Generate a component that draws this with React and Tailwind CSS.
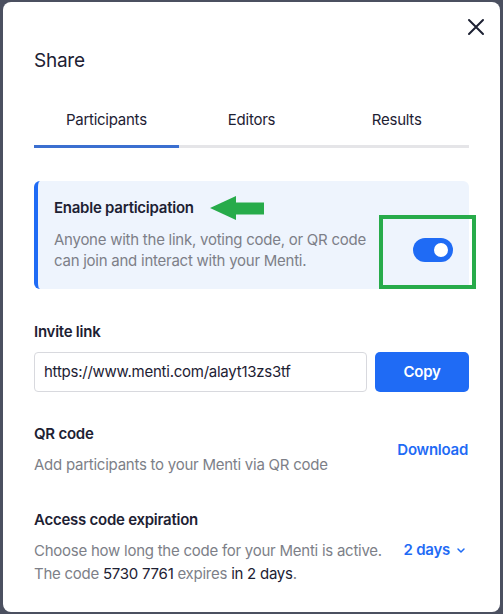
import React from "react";

export default function App() {
  return (
    <div className="w-[503px] h-[614px] bg-[#4b5060] pl-[3px] pr-[3px] pt-[2px] pb-[2px] tracking-[-0.25px]" style={{ fontFamily: "Inter, 'Noto Sans', sans-serif" }}>
      <div className="relative h-full w-full rounded-[8px] bg-white px-[31px] text-[#1d2133]">
        <button className="absolute right-[15px] top-[16px] text-[#1d2133]">
          <svg width="18" height="18" viewBox="0 0 18 18" fill="none" stroke="currentColor" strokeWidth="2" strokeLinecap="round">
            <path d="M2 2L16 16M16 2L2 16" />
          </svg>
        </button>
        <div className="pt-[47px] text-[19px] leading-[24px]">Share</div>
        <div className="mt-[25px] flex">
          <div className="flex h-[50px] w-[145px] items-center justify-center border-b-[3px] border-[#3b6fd0] pb-[2px] text-[15px] text-[#1d2133]">Participants</div>
          <div className="flex h-[50px] w-[146px] items-center justify-center border-b-[3px] border-[#e5e5e8] pb-[2px] text-[15px]">Editors</div>
          <div className="flex h-[50px] w-[145px] items-center justify-center border-b-[3px] border-[#e5e5e8] pb-[2px] text-[15px]">Results</div>
        </div>
        <div className="relative mt-[33px] flex h-[108px] items-start rounded-[6px] border-l-[4px] border-[#1f6bf5] bg-[#eef4fd] pl-[16px] pr-[16px] pt-[14px]">
          <div className="flex-1">
            <div className="flex h-[26px] items-center gap-[15px]">
              <span className="text-[15px] font-semibold">Enable participation</span>
              <svg width="56" height="26" viewBox="0 0 56 26">
                <path d="M1 13 L27 1 L27 7.5 L55 7.5 L55 19.5 L27 19.5 L27 25 Z" fill="#27ab4a" />
              </svg>
            </div>
            <div className="mt-[8px] text-[15px] leading-[21px] text-[#7d7f88]">
              Anyone with the link, voting code, or QR code<br />can join and interact with your Menti.
            </div>
          </div>
          <div className="absolute left-[341px] top-[34px] h-[74px] w-[97px] border-[4px] border-[#27ab4a] pl-[30px] pt-[19px]">
            <div className="flex h-[24px] w-[40px] items-center justify-end rounded-full bg-[#1f6bf5] pr-[3px]">
              <div className="h-[18px] w-[18px] rounded-full border-[2px] border-[#1f6bf5] bg-white"></div>
            </div>
          </div>
        </div>
        <div className="mt-[33px] text-[15px] font-semibold leading-[20px]">Invite link</div>
        <div className="mt-[10px] flex gap-[8px]">
          <div className="flex h-[40px] w-[333px] items-center rounded-[4px] border border-[#d8d9de] px-[9px] text-[15px]">https://www.menti.com/alayt13zs3tf</div>
          <button className="h-[40px] flex-1 rounded-[5px] bg-[#1f6bf5] text-[15px] font-semibold text-white">Copy</button>
        </div>
        <div className="mt-[32px] flex items-center">
          <div className="flex-1">
            <div className="text-[15px] font-semibold leading-[20px]">QR code</div>
            <div className="mt-[10px] text-[15px] leading-[22px] text-[#7d7f88]">Add participants to your Menti via QR code</div>
          </div>
          <div className="pr-[1px] text-[15px] font-semibold text-[#1f6bf5]">Download</div>
        </div>
        <div className="mt-[34px] text-[15px] font-semibold leading-[20px]">Access code expiration</div>
        <div className="mt-[9px] flex items-start">
          <div className="flex-1 text-[15px] leading-[23px] text-[#7d7f88]">
            Choose how long the code for your Menti is active.<br />
            The code <span className="text-[#1d2133]">5730 7761</span> expires <span className="text-[#1d2133]">in 2 days</span>.
          </div>
          <div className="flex items-center gap-[6px] pr-[3px] text-[15px] font-semibold text-[#1f6bf5]">
            2 days
            <svg width="10" height="10" viewBox="0 0 10 10" fill="none" stroke="currentColor" strokeWidth="1.5" strokeLinecap="round" strokeLinejoin="round"><path d="M2 4L5 7L8 4" /></svg>
          </div>
        </div>
      </div>
    </div>
  );
}
